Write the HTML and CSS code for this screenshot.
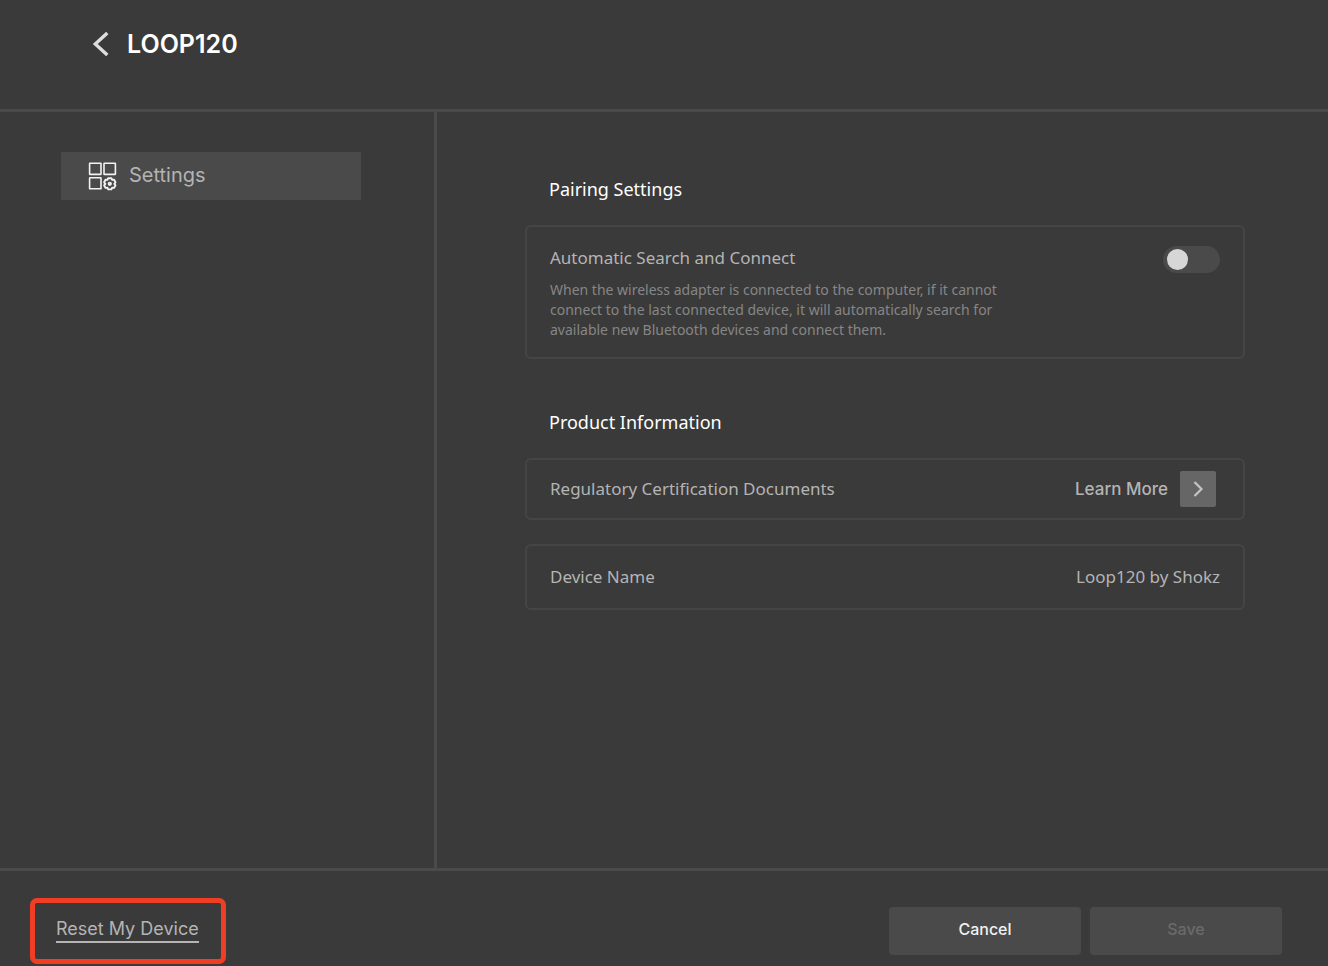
FILE: index.html
```html
<!DOCTYPE html>
<html lang="en">
<head>
<meta charset="utf-8">
<meta name="viewport" content="width=device-width, initial-scale=1">
<title>LOOP120</title>
<link rel="stylesheet" href="styles.css">
</head>
<body>
<header class="topbar">
  <button class="back" type="button" aria-label="Back">
    <svg width="18" height="26" viewBox="0 0 18 26" fill="none" stroke="#dedede" stroke-width="3.4"><path d="M15.3 2 3.3 13l12 11"/></svg>
  </button>
  <h1 class="title">LOOP120</h1>
</header>
<div class="body">
  <nav class="sidebar">
    <a class="nav-item" href="#settings">
      <svg width="30" height="30" viewBox="0 0 30 30" fill="none" stroke="#f2f2f2" stroke-width="1.6" stroke-linejoin="round">
        <rect x="2.6" y="2.2" width="11.4" height="11.2" rx=".4"/>
        <rect x="17" y="2.2" width="11.4" height="11.2" rx=".4"/>
        <rect x="2.6" y="16.8" width="11.4" height="11" rx=".4"/>
        <g stroke-width="1.9">
          <path d="M21.2 17.2h3.2l.8 1.7 1.9-.2 1.4 2.6-1.2 1.5 1.2 1.5-1.4 2.6-1.9-.2-.8 1.7h-3.2l-.8-1.7-1.9.2-1.4-2.6 1.2-1.5-1.2-1.5 1.4-2.6 1.9.2z"/>
          <circle cx="22.8" cy="22.8" r="1.2"/>
        </g>
      </svg>
      <span>Settings</span>
    </a>
  </nav>
  <main class="content" id="settings">
    <section class="section">
      <h2 class="heading">Pairing Settings</h2>
      <div class="card card-setting">
        <div class="setting-text">
          <label class="label" for="auto">Automatic Search and Connect</label>
          <p class="hint" id="auto-hint">When the wireless adapter is connected to the computer, if it cannot connect to the last connected device, it will automatically search for available new Bluetooth devices and connect them.</p>
        </div>
        <input class="switch" type="checkbox" role="switch" id="auto" aria-describedby="auto-hint">
      </div>
    </section>
    <section class="section">
      <h2 class="heading">Product Information</h2>
      <div class="card card-docs">
        <span class="label">Regulatory Certification Documents</span>
        <a class="more" href="#documents">
          <span>Learn More</span>
          <span class="more-icon"><svg width="12" height="18" viewBox="0 0 12 18" fill="none" stroke="#c4c4c4" stroke-width="2.2"><path d="m2.5 2 7 7-7 7"/></svg></span>
        </a>
      </div>
      <div class="card card-name">
        <span class="label">Device Name</span>
        <span class="label">Loop120 by Shokz</span>
      </div>
    </section>
  </main>
</div>
<footer class="footer">
  <div class="highlight"><button class="reset" type="button">Reset My Device</button></div>
  <div class="actions">
    <button class="btn" type="button">Cancel</button>
    <button class="btn" type="button" disabled>Save</button>
  </div>
</footer>
</body>
</html>
```
FILE: styles.css
```css
* { box-sizing: border-box; }
body {
  margin: 0;
  min-height: 100vh;
  display: flex;
  flex-direction: column;
  background: #3a3a3a;
  color: #b4b4b4;
  font-family: "Noto Sans", "Open Sans", sans-serif;
}
button { font: inherit; color: inherit; border: 0; background: none; padding: 0; cursor: pointer; }
a { color: inherit; text-decoration: none; }
svg { display: block; flex: none; }
.topbar {
  display: flex;
  align-items: center;
  gap: 17px;
  padding: 28px 92px 49px;
  border-bottom: 3px solid #4a4a4a;
}
.title {
  margin: 0;
  font: 600 25px/32px Inter, sans-serif;
  color: #fff;
}
.body { flex: 1; display: flex; }
.sidebar {
  flex: 0 0 437px;
  padding: 40px 73px 40px 61px;
  border-right: 3px solid #4a4a4a;
}
.nav-item {
  display: flex;
  align-items: center;
  gap: 12px;
  height: 48px;
  padding: 0 26px;
  background: #4a4a4a;
  font: 400 20px/24px Inter, sans-serif;
}
.nav-item span { padding-bottom: 2px; }
.content {
  flex: 1;
  padding: 63px 83px 40px 88px;
}
.section { display: flex; flex-direction: column; margin-bottom: 49px; }
.heading {
  margin: 0 0 22px;
  padding-left: 24px;
  font-size: 18px;
  line-height: 28px;
  font-weight: 400;
  color: #fff;
}
.card {
  display: flex;
  justify-content: space-between;
  align-items: center;
  border: 2px solid #454545;
  border-radius: 6px;
  padding: 0 23px;
}
.card + .card { margin-top: 24px; }
.card-setting { align-items: flex-start; padding: 19px 23px 17px; }
.card-docs { min-height: 62px; padding-right: 27px; }
.card-name { min-height: 66px; }
.setting-text { max-width: 466px; }
.label { display: block; font-size: 17px; line-height: 24px; }
.hint { margin: 10px 0 0; font-size: 14px; line-height: 20px; color: #868686; }
.switch {
  appearance: none;
  flex: none;
  width: 57px;
  height: 27px;
  margin: 0;
  padding: 3px 4px;
  border-radius: 14px;
  background: #4a4a4a;
  cursor: pointer;
}
.switch::before {
  content: "";
  display: block;
  width: 21px;
  height: 21px;
  border-radius: 50%;
  background: #d6d6d6;
}
.switch:checked::before { margin-left: auto; }
.more {
  display: flex;
  align-items: center;
  gap: 12px;
  font: 500 17px/24px Inter, sans-serif;
}
.more-icon {
  display: grid;
  place-items: center;
  width: 36px;
  height: 36px;
  border-radius: 2px;
  background: #666;
}
.footer {
  display: flex;
  justify-content: space-between;
  align-items: center;
  padding: 27px 46px 2px 30px;
  border-top: 3px solid #4a4a4a;
  font: 500 16px/24px Inter, sans-serif;
}
.highlight {
  border: 5px solid #ef3e23;
  border-radius: 7px;
  padding: 14px 22px 16px 21px;
}
.reset { border-bottom: 2px solid #b4b4b4; font-size: 18px; font-weight: 400; }
.actions { display: flex; gap: 9px; }
.btn {
  width: 192px;
  height: 48px;
  padding-bottom: 4px;
  border-radius: 4px;
  background: #4a4a4a;
  color: #f0f0f0;
}
.btn:disabled { color: #6a6a6a; cursor: default; }
```
